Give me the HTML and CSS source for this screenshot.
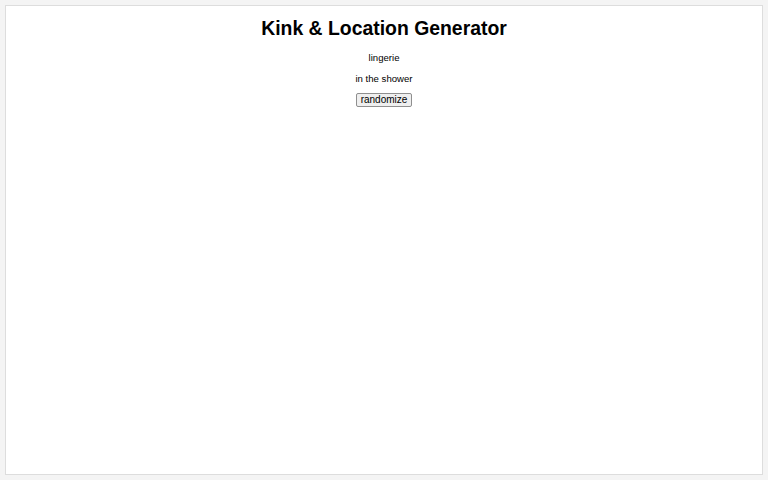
FILE: index.html
```html
<!DOCTYPE html>
<html lang="en">
<head>
    <meta charset="UTF-8">
    <meta name="viewport" content="width=device-width, initial-scale=1.0">
    <title>Kink &amp; Location Generator</title>
    <link rel="stylesheet" href="styles.css">
</head>
<body>
    <div class="container">
        <h1>Kink &amp; Location Generator</h1>
        <p id="kink">lingerie</p>
        <p id="location" class="last">in the shower</p>
        <button type="button" onclick="randomize()">randomize</button>
    </div>
    <script>
        const kinks = ['lingerie', 'blindfolds', 'roleplay', 'massage oil', 'handcuffs'];
        const locations = ['in the shower', 'in the kitchen', 'on the couch', 'in the car', 'on the balcony'];

        function pick(list) {
            return list[Math.floor(Math.random() * list.length)];
        }

        function randomize() {
            document.getElementById('kink').textContent = pick(kinks);
            document.getElementById('location').textContent = pick(locations);
        }
    </script>
</body>
</html>
```

FILE: styles.css
```css
html, body {
    height: 100%;
}
body {
    font-family: 'Liberation Sans', Arial, sans-serif;
    margin: 0;
    padding: 5px;
    box-sizing: border-box;
    background-color: #f4f4f4;
    color: #000000;
}
.container {
    height: 100%;
    box-sizing: border-box;
    background-color: #ffffff;
    border: 1px solid #dddddd;
    text-align: center;
    padding-top: 11px;
}
h1 {
    font-size: 19.4px;
    margin: 0 0 12px;
}
p {
    font-size: 9.6px;
    margin: 0 0 10px;
}
p.last {
    margin-bottom: 5px;
}
button {
    font-family: 'Liberation Sans', Arial, sans-serif;
    font-size: 10px;
    line-height: 12px;
    padding: 0 4px;
    background-color: #efefef;
    border: 1px solid #8f8f8f;
    border-radius: 2px;
}
```
